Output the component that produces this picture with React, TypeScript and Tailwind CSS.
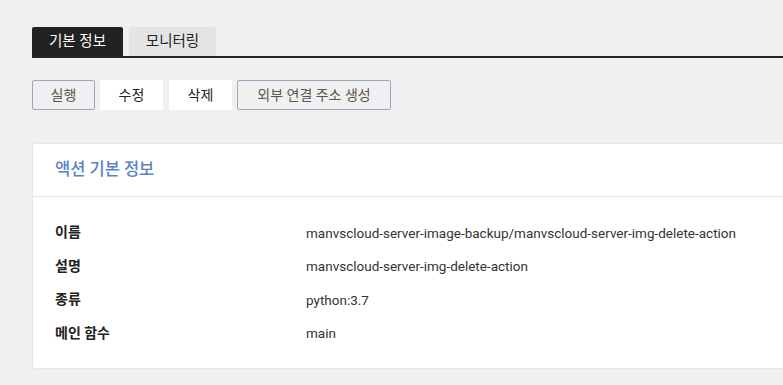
const font = { fontFamily: "Roboto, 'Noto Sans CJK KR', sans-serif" }

const rows = [
  { label: '이름', value: 'manvscloud-server-image-backup/manvscloud-server-img-delete-action' },
  { label: '설명', value: 'manvscloud-server-img-delete-action' },
  { label: '종류', value: 'python:3.7' },
  { label: '메인 함수', value: 'main' },
]

export default function App() {
  return (
    <div className="w-[783px] h-[385px] overflow-hidden bg-[#f0f0f0]" style={font}>
      <div className="w-[1100px] pl-[32px] pt-[27px]">
        {/* tabs */}
        <div className="flex items-end gap-[6px] border-b-2 border-[#222]">
          <div className="w-[91px] h-[29px] flex items-center justify-center bg-[#222] text-white text-[14.5px] rounded-t-[2px]">
            기본 정보
          </div>
          <div className="w-[87px] h-[29px] flex items-center justify-center bg-[#e4e4e4] text-[#222] text-[14.5px] rounded-t-[2px]">
            모니터링
          </div>
        </div>

        {/* actions */}
        <div className="flex gap-[5px] mt-[22px] text-[14px]">
          <button className="w-[63px] h-[30px] border border-[#9aa8c6] rounded-[2px] text-[#555]">실행</button>
          <button className="w-[63px] h-[30px] bg-white text-[#222]">수정</button>
          <button className="w-[63px] h-[30px] ml-[1px] bg-white text-[#222]">삭제</button>
          <button className="w-[154px] h-[30px] border border-[#9aa8c6] rounded-[2px] text-[#555]">외부 연결 주소 생성</button>
        </div>

        {/* info card */}
        <div className="mt-[33px] bg-white border border-[#e6e6e6] rounded-[4px]">
          <div className="h-[53px] flex items-center px-[22px] border-b border-[#e2e2e2]">
            <h2 className="text-[16.5px] font-medium text-[#5a82c8]">액션 기본 정보</h2>
          </div>
          <div className="pt-[19px] pb-[18px] px-[22px]">
            {rows.map((r) => (
              <div key={r.label} className="flex items-center h-[33.5px]">
                <div className="w-[251px] text-[14px] font-semibold text-[#222]">{r.label}</div>
                <div className="text-[13.5px] text-[#333]">{r.value}</div>
              </div>
            ))}
          </div>
        </div>
      </div>
    </div>
  )
}
